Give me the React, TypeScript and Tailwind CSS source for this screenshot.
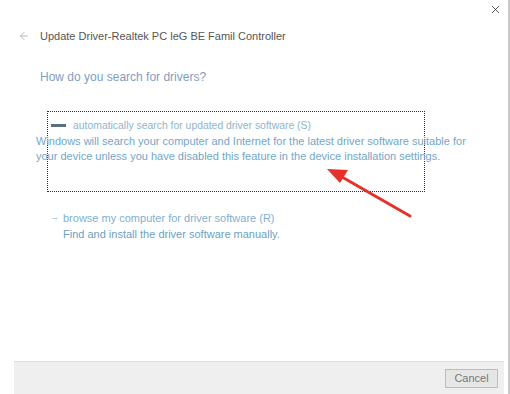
import {ArrowLeft, X} from 'lucide-react';

function RedArrow() {
  return (
    <svg className="absolute left-[320px] top-[161px]" width="100" height="60" viewBox="0 0 100 60">
      <path d="M90 55 L22 16" stroke="#e8302a" strokeWidth="3" strokeLinecap="round" />
      <path d="M7 8 L28 9 L20 22 Z" fill="#e8302a" />
    </svg>
  );
}

export default function App() {
  return (
    <div
      className="relative w-[510px] h-[394px] bg-white overflow-hidden flex flex-col"
      style={{fontFamily: '"Liberation Sans", Arial, sans-serif'}}
    >
      <div className="absolute right-0 top-0 h-full w-[2px] bg-[#c8c8c8]" />
      <div className="flex justify-end pt-[3px] pr-[8px] h-[20px]">
        <X className="w-[13px] h-[13px] text-[#333]" strokeWidth={1.5} />
      </div>

      <div className="flex items-center pl-[18px] pt-[8px] gap-[10px]">
        <ArrowLeft className="w-[12px] h-[12px] text-[#b8b8b8]" strokeWidth={2} />
        <span className="text-[11px] text-[#555]">Update Driver-Realtek PC leG BE Famil Controller</span>
      </div>

      <div className="pl-[40px] pt-[23px] text-[12px] text-[#7f9dc2]">How do you search for drivers?</div>

      <div className="ml-[47px] mt-[25px] w-[378px] h-[81px] border border-dotted border-[#333] pt-[6px]">
        <div className="flex items-center gap-[7px] pl-[3px]">
          <span className="block w-[15px] h-[3px] bg-[#5a7080]" />
          <span className="text-[10.4px] text-[#8db5cc]">automatically search for updated driver software (S)</span>
        </div>
        <p className="-ml-[12px] mt-[1px] w-[440px] text-[11px] leading-[15px] text-[#72a6c8]">
          Windows will search your computer and Internet for the latest driver software suitable for your device
          unless you have disabled this feature in the device installation settings.
        </p>
      </div>

      <div className="pl-[50px] pt-[18px]">
        <div className="flex items-center gap-[4px] text-[11px] text-[#7fb0cf]">
          <span className="text-[9px]">→</span>
          <span>browse my computer for driver software (R)</span>
        </div>
        <div className="pl-[13px] pt-0 text-[11px] text-[#6a9fc3]">Find and install the driver software manually.</div>
      </div>

      <div className="mt-auto ml-[14px] mr-[6px] h-[33px] bg-[#efefef] border-t border-[#dcdcdc] flex items-center justify-end pr-[6px]">
        <button className="w-[53px] h-[19px] border border-[#bdbdbd] bg-[#e6e6e6] text-[11px] text-[#777] leading-none">
          Cancel
        </button>
      </div>

      <RedArrow />
    </div>
  );
}
